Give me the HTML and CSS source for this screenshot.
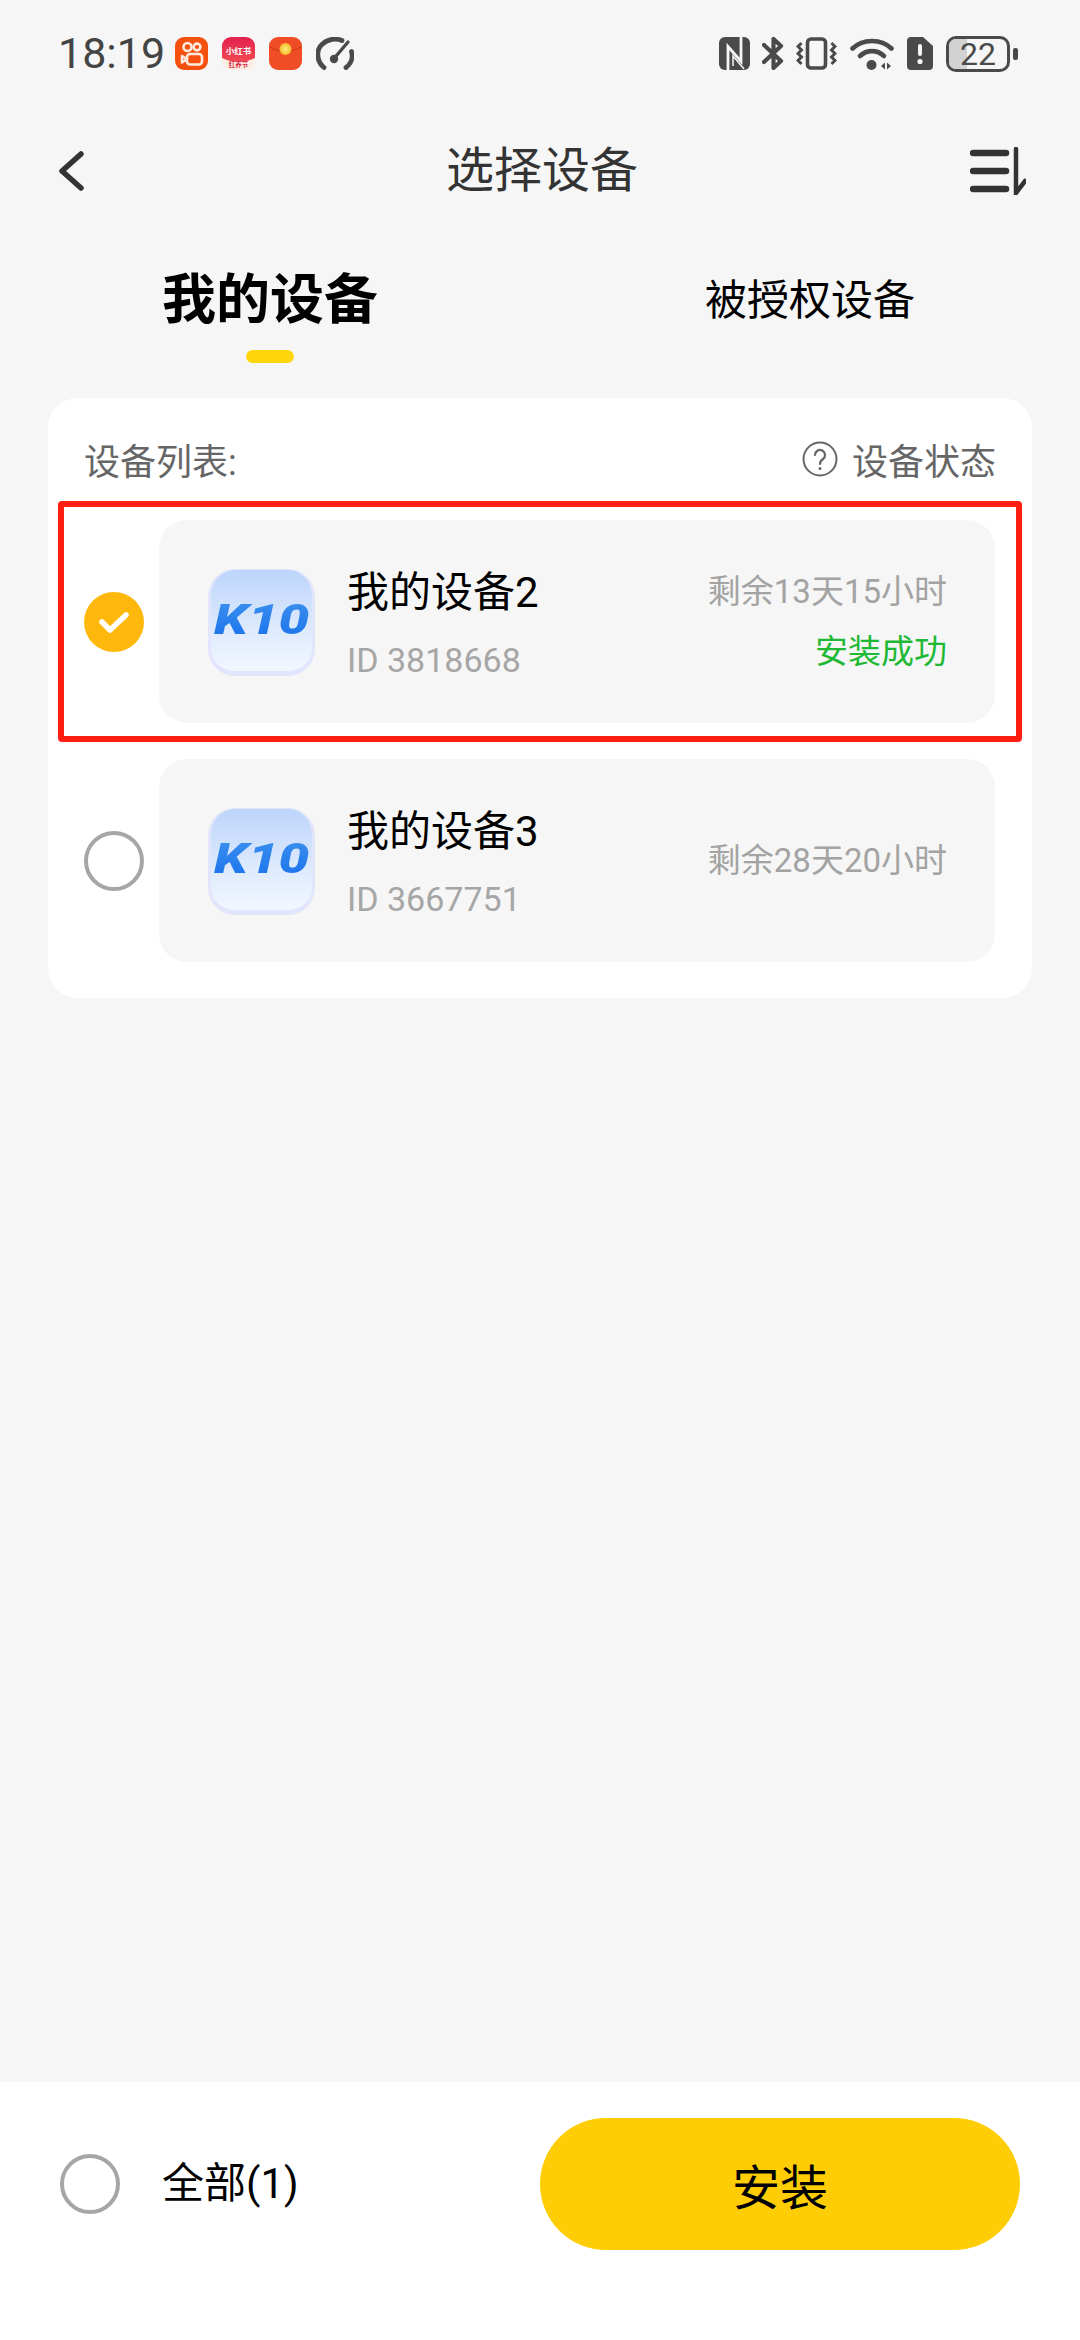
FILE: index.html
```html
<!DOCTYPE html>
<html lang="zh">
<head>
<meta charset="utf-8">
<title>选择设备</title>
<link rel="stylesheet" href="styles.css">
</head>
<body>
<div class="screen">
  <div class="status">
    <span class="time">18:19</span>
    <div class="apps">
      <svg class="ico33" viewBox="0 0 33 33"><rect width="33" height="33" rx="9" fill="#f4510f"/><g fill="none" stroke="#ffe9dc" stroke-width="2.600"><circle cx="12.500" cy="10" r="4"/><circle cx="22" cy="10" r="3.400"/><rect x="12" y="17" width="15" height="10.500" rx="3"/><path d="M12 22.200l-5-3.200v6.500z" stroke-linejoin="round"/></g></svg>
      <svg class="ico33" viewBox="0 0 33 33"><defs><linearGradient id="xhs" x1="0" y1="0" x2="0" y2="1"><stop offset="0" stop-color="#e3204f"/><stop offset="1" stop-color="#f24a52"/></linearGradient></defs><rect width="33" height="33" rx="9" fill="#fdeee4"/><path d="M0 9a9 9 0 0 1 9-9h15a9 9 0 0 1 9 9v12q-16.500 8-33 0z" fill="url(#xhs)"/><text class="xhs1" x="16.500" y="16.500" text-anchor="middle">小红书</text><text class="xhs2" x="16.500" y="29.500" text-anchor="middle">红养节</text></svg>
      <svg class="ico33" viewBox="0 0 33 33"><defs><radialGradient id="coin"><stop offset="0" stop-color="#fff07a"/><stop offset="1" stop-color="#f2b92c"/></radialGradient></defs><rect width="33" height="33" rx="9" fill="#f04c25"/><path d="M1 10q15 9 31 0" fill="none" stroke="#d13a1b" stroke-width="1.200"/><circle cx="16.500" cy="12" r="6" fill="url(#coin)"/></svg>
      <svg class="gauge" viewBox="0 0 38 33"><g fill="none" stroke="#4a4a4a" stroke-width="4.800" stroke-linecap="round"><path d="M8 30.500C0 24 0 12 6.500 7 12 2 20 1 26 3.500"/><path d="M30 30.500c6-4.500 7-11 5.500-16"/><path d="M18 21.500L32 5" stroke-width="3.400"/></g><circle cx="18" cy="22" r="4.200" fill="#4a4a4a"/></svg>
    </div>
    <div class="sys">
      <svg class="nfc" viewBox="0 0 31 33"><rect width="31" height="33" rx="6" fill="#4a4a4a"/><path d="M9 33V9.500l13 15V0" fill="none" stroke="#f6f6f6" stroke-width="2.800"/><path d="M14 29V19l11 13" fill="none" stroke="#f6f6f6" stroke-width="1.500"/></svg>
      <svg class="bt" viewBox="0 0 22 33"><path d="M2 25L19 9 11.500 2v29l7.500-7L2 8" fill="none" stroke="#4a4a4a" stroke-width="4.200" stroke-linejoin="round" stroke-linecap="round"/></svg>
      <svg class="vib" viewBox="0 0 41 33"><rect x="11.500" y="2" width="18" height="29" rx="3.500" fill="none" stroke="#4a4a4a" stroke-width="3.600"/><path d="M5.500 6L2 9.500 5.500 13 2 16.500 5.500 20 2 23.500 5.500 27M35.500 6L39 9.500 35.500 13 39 16.500 35.500 20 39 23.500 35.500 27" fill="none" stroke="#4a4a4a" stroke-width="3"/></svg>
      <svg class="wifi" viewBox="0 0 44 33"><g fill="none" stroke="#4a4a4a" stroke-width="4.600" stroke-linecap="round"><path d="M2.500 11.500C13 1.500 31 1.500 41.500 11.500"/><path d="M10 19c7-6.500 17-6.500 24 0"/></g><circle cx="21.500" cy="28" r="5" fill="#4a4a4a"/><path d="M31 29l4-3.500v7zM37 25.500v7l4-3.500z" fill="#4a4a4a"/></svg>
      <svg class="sim" viewBox="0 0 26 33"><path d="M4 0h12l10 9v20a4 4 0 0 1-4 4H4a4 4 0 0 1-4-4V4a4 4 0 0 1 4-4z" fill="#4a4a4a"/><rect x="11" y="7" width="4" height="12" rx="2" fill="#f6f6f6"/><circle cx="13" cy="24.500" r="2.600" fill="#f6f6f6"/></svg>
      <div class="battery">
        <div class="cell"><span class="charge"></span><span class="level">22</span></div>
        <span class="nub"></span>
      </div>
    </div>
  </div>

  <header class="nav">
    <svg class="back" viewBox="0 0 26 40"><path d="M23 3L4 20l19 17" fill="none" stroke="#333" stroke-width="5.500" stroke-linecap="round" stroke-linejoin="round"/></svg>
    <h1 class="title">选择设备</h1>
    <svg class="sort" viewBox="0 0 56 48"><g stroke="#333" fill="none" stroke-linecap="round"><path d="M3 6h33M3 24h33M3 42h33" stroke-width="6.500"/><path d="M46 2v44l9-12" stroke-width="4.500"/></g></svg>
  </header>

  <nav class="tabs">
    <div class="tab tab-on"><span class="tab-label">我的设备</span><span class="tab-mark"></span></div>
    <div class="tab"><span class="tab-label">被授权设备</span></div>
  </nav>

  <section class="card">
    <div class="card-head">
      <span>设备列表:</span>
      <span class="state"><svg class="help" viewBox="0 0 36 36"><circle cx="18" cy="18" r="16.500" fill="none" stroke="#666" stroke-width="2"/><path d="M13 14a5 5 0 1 1 8 4c-2 1.500-3 2.500-3 5" fill="none" stroke="#666" stroke-width="2.200" stroke-linecap="round"/><circle cx="18" cy="27.500" r="1.500" fill="#666"/></svg>设备状态</span>
    </div>
    <div class="rows">
      <div class="row row-marked">
        <span class="radio radio-on"><svg class="tick" viewBox="0 0 32 24"><path d="M4 12l8 8L28 5" fill="none" stroke="#fff" stroke-width="5.500" stroke-linecap="round" stroke-linejoin="round"/></svg></span>
        <div class="tile">
          <div class="logo"><span class="logo-text">K10</span></div>
          <div class="info"><div class="name">我的设备2</div><div class="id">ID 3818668</div></div>
          <div class="meta"><div class="left">剩余13天15小时</div><div class="ok">安装成功</div></div>
        </div>
      </div>
      <div class="row">
        <span class="radio"></span>
        <div class="tile">
          <div class="logo"><span class="logo-text">K10</span></div>
          <div class="info"><div class="name">我的设备3</div><div class="id">ID 3667751</div></div>
          <div class="meta"><div class="left">剩余28天20小时</div></div>
        </div>
      </div>
    </div>
  </section>

  <div class="spacer"></div>

  <footer class="foot">
    <div class="all"><span class="radio"></span><span class="all-label">全部(1)</span></div>
    <button class="install">安装</button>
  </footer>
</div>
</body>
</html>
```
FILE: styles.css
```css
* { box-sizing: border-box; }
html, body { margin: 0; padding: 0; }
body {
  font-family: Roboto, "Noto Sans CJK SC", sans-serif;
  background: #f6f6f6;
  color: #000;
}
.screen { width: 1080px; height: 2340px; display: flex; flex-direction: column; overflow: hidden; }

/* status bar */
.status { height: 107px; padding: 37px 62px 0 58px; display: flex; align-items: flex-start; }
.time { font-size: 43px; line-height: 33px; color: #444; width: 117px; }
.apps { display: flex; gap: 14px; }
.ico33 { width: 33px; height: 33px; display: block; }
.gauge { width: 38px; height: 33px; display: block; }
.xhs1 { font: 700 8.500px "Noto Sans CJK SC", sans-serif; fill: #fff; }
.xhs2 { font: 700 6.500px "Noto Sans CJK SC", sans-serif; fill: #d9304a; }
.sys { margin-left: auto; display: flex; align-items: center; height: 33px; }
.nfc { width: 31px; height: 33px; margin-right: 12px; }
.bt { width: 22px; height: 33px; margin-right: 12px; }
.vib { width: 41px; height: 33px; margin-right: 13px; }
.wifi { width: 44px; height: 33px; margin-right: 13px; }
.sim { width: 26px; height: 33px; margin-right: 13px; }
.battery { display: flex; align-items: center; gap: 3px; }
.cell { position: relative; width: 64px; height: 36px; border: 3px solid #4a4a4a; border-radius: 10px; display: flex; align-items: center; }
.charge { position: absolute; left: 0; top: 0; bottom: 0; width: 18px; border-radius: 7px 0 0 7px; background: #d2d2d2; }
.level { position: relative; margin-left: 11px; font-size: 32px; line-height: 30px; color: #4a4a4a; }
.nub { width: 5px; height: 12px; border-radius: 2px; background: #4a4a4a; }

/* nav */
.nav { height: 126px; padding: 2px 54px 0 58px; display: grid; grid-template-columns: 1fr auto 1fr; align-items: center; }
.back { width: 26px; height: 40px; display: block; }
.title { margin: 0; font-size: 48px; font-weight: 400; color: #333; line-height: 60px; }
.sort { width: 56px; height: 48px; display: block; justify-self: end; }

/* tabs */
.tabs { height: 165px; padding-top: 33px; display: grid; grid-template-columns: 1fr 1fr; }
.tab { display: flex; flex-direction: column; align-items: center; }
.tab-label { font-size: 42px; line-height: 70px; }
.tab-on .tab-label { font-size: 54px; font-weight: 700; }
.tab-mark { width: 48px; height: 13px; margin-top: 14px; border-radius: 7px; background: #ffd60a; }

/* card */
.card { margin: 0 48px; padding: 0 37px 36px 36px; background: #fff; border-radius: 30px; }
.card-head { height: 122px; display: flex; justify-content: space-between; align-items: center; font-size: 36px; color: #666; }
.state { display: flex; align-items: center; gap: 14px; margin-right: -1px; }
.help { width: 36px; height: 36px; display: block; }
.rows { display: flex; flex-direction: column; gap: 36px; }
.row { position: relative; display: flex; align-items: center; gap: 15px; }
.row-marked::after {
  content: "";
  position: absolute;
  left: -26px; right: -27px; top: -19px; bottom: -19px;
  border: 6px solid #ff1f12;
  border-radius: 4px;
  pointer-events: none;
}
.radio { flex: none; width: 60px; height: 60px; border-radius: 50%; border: 4px solid #a6a6a6; display: flex; align-items: center; justify-content: center; }
.radio-on { border: 0; background: #fdb80b; }
.tick { width: 32px; height: 24px; display: block; }
.tile { flex: 1; height: 203px; padding: 0 48px 0 48px; background: #f6f6f6; border-radius: 28px; display: flex; align-items: center; }
.logo {
  flex: none; width: 107px; height: 107px; margin-top: 1px; margin-left: 1px; border-radius: 27px;
  background: linear-gradient(#bcd5fb, #d9e7fd 50%, #f3f7ff);
  border: solid #e2e5fb;
  border-width: 1px 3px 5px;
  display: flex; align-items: center; justify-content: center;
}
.logo-text {
  font: italic 900 42px/50px Roboto, sans-serif;
  transform: scaleX(1.3);
  background: linear-gradient(#3f93ee, #166fec);
  -webkit-background-clip: text;
  background-clip: text;
  color: transparent;
}
.info { margin-left: 32px; padding-top: 5px; display: flex; flex-direction: column; gap: 23px; }
.name { font-size: 42px; line-height: 48px; }
.id { font-size: 34px; line-height: 40px; color: #a6a6a6; }
.meta { margin-left: auto; display: flex; flex-direction: column; align-items: flex-end; gap: 22px; font-size: 33px; line-height: 38px; }
.left { color: #a3a3a3; }
.ok { color: #1fb936; }

.spacer { flex: 1; }

/* footer */
.foot { height: 258px; padding: 36px 60px 0 60px; background: #fff; display: flex; align-items: flex-start; justify-content: space-between; }
.all { height: 132px; display: flex; align-items: center; gap: 42px; }
.all-label { font-size: 42px; line-height: 50px; }
.install { width: 480px; height: 132px; border: 0; border-radius: 66px; background: #ffcd05; color: #000; font: 400 48px "Noto Sans CJK SC", sans-serif; }
```
